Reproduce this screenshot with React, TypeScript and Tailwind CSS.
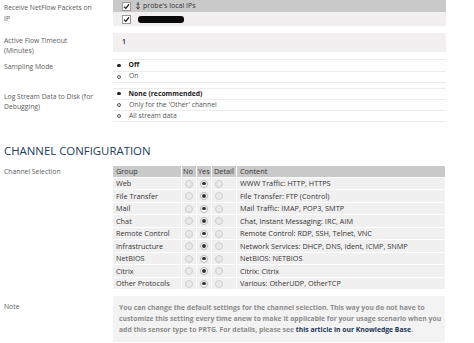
import React from 'react';

const channels = [
  { group: 'Web', content: 'WWW Traffic: HTTP, HTTPS' },
  { group: 'File Transfer', content: 'File Transfer: FTP (Control)' },
  { group: 'Mail', content: 'Mail Traffic: IMAP, POP3, SMTP' },
  { group: 'Chat', content: 'Chat, Instant Messaging: IRC, AIM' },
  { group: 'Remote Control', content: 'Remote Control: RDP, SSH, Telnet, VNC' },
  { group: 'Infrastructure', content: 'Network Services: DHCP, DNS, Ident, ICMP, SNMP' },
  { group: 'NetBIOS', content: 'NetBIOS: NETBIOS' },
  { group: 'Citrix', content: 'Citrix: Citrix' },
  { group: 'Other Protocols', content: 'Various: OtherUDP, OtherTCP' },
];

const Check: React.FC = () => (
  <span className="w-[9px] h-[9px] border border-[#9a9a9a] bg-white flex items-center justify-center">
    <svg width="7" height="7" viewBox="0 0 7 7">
      <path d="M1 3.6 L2.8 5.4 L6 1.4" fill="none" stroke="#111" strokeWidth="1.3" />
    </svg>
  </span>
);

const Radio: React.FC<{ on?: boolean }> = ({ on }) => (
  <span
    className={
      on
        ? 'w-[8px] h-[8px] rounded-full border border-[#b5b5b5] bg-white flex items-center justify-center'
        : 'w-[8px] h-[8px] rounded-full border border-[#cfcfcf] bg-[#e9e9e9]'
    }
  >
    {on && <span className="w-[3.5px] h-[3.5px] rounded-full bg-[#333]"></span>}
  </span>
);

const Option: React.FC<{ label: string; on?: boolean; h: string }> = ({ label, on, h }) => (
  <div className={`${h} flex items-center border-b border-[#ececec] pl-[4px]`}>
    {on ? (
      <span className="w-[3.5px] h-[3.5px] rounded-full bg-[#222]"></span>
    ) : (
      <span className="w-[4px] h-[4px] rounded-full border border-[#555]"></span>
    )}
    <span className={on ? 'ml-[8px] font-bold text-[#222]' : 'ml-[8px] text-[#555]'}>{label}</span>
  </div>
);

const App: React.FC = () => {
  return (
    <div className="w-[474px] h-[343px] bg-white overflow-hidden font-['Open_Sans',sans-serif] text-[6.8px] text-[#5c5c5c]">
      {/* Receive NetFlow Packets on IP */}
      <div className="flex">
        <div className="w-[113px] pl-[4px] pt-[3px] leading-[10.7px]">
          Receive NetFlow Packets on
          <br />
          IP
        </div>
        <div className="w-[333px]">
          <div className="h-[12px] bg-[#c9c9c9] flex items-center pl-[9px] text-[#333] text-[7px]">
            <Check />
            <svg className="ml-[5px]" width="4" height="8" viewBox="0 0 4 8">
              <path d="M2 0 V7 M0.4 5 L2 7.2 L3.6 5 M0.6 2.2 H3.4" fill="none" stroke="#444" strokeWidth="0.9" />
            </svg>
            <span className="ml-[3px]">probe&apos;s local IPs</span>
          </div>
          <div className="h-[14px] bg-[#f1eff0] flex items-center pl-[9px]">
            <Check />
            <span className="ml-[7px] w-[46px] h-[7px] rounded-[3px] bg-[#0a0a0a]"></span>
          </div>
        </div>
      </div>

      {/* Active Flow Timeout */}
      <div className="flex mt-[7px] h-[19px] items-start">
        <div className="w-[113px] pl-[4px] pt-[3px] leading-[10.2px]">
          Active Flow Timeout
          <br />
          (Minutes)
        </div>
        <div className="w-[333px] h-[19px] bg-[#f1eff0] flex items-center pl-[9px] text-[#222] text-[7px] font-semibold">
          1
        </div>
      </div>

      {/* Sampling Mode */}
      <div className="flex mt-[7px]">
        <div className="w-[113px] pl-[4px] pt-[3px]">Sampling Mode</div>
        <div className="w-[333px] border-t border-[#ececec]">
          <Option h="h-[11.5px]" label="Off" on />
          <Option h="h-[11px]" label="On" />
        </div>
      </div>

      {/* Log Stream */}
      <div className="flex mt-[5px]">
        <div className="w-[113px] pl-[4px] pt-[4px] leading-[10.7px]">
          Log Stream Data to Disk (for
          <br />
          Debugging)
        </div>
        <div className="w-[333px] border-t border-[#ececec]">
          <Option h="h-[11.3px]" label="None (recommended)" on />
          <Option h="h-[11px]" label="Only for the 'Other' channel" />
          <Option h="h-[11px]" label="All stream data" />
        </div>
      </div>

      <div className="mt-[22px] pl-[4px] text-[11.4px] leading-[14px] text-[#223d5c]">CHANNEL CONFIGURATION</div>

      {/* Channel Selection */}
      <div className="flex mt-[8px]">
        <div className="w-[113px] pl-[4px] pt-[1px]">Channel Selection</div>
        <div className="w-[332px] text-[7.3px] text-[#333]">
          <div className="h-[11px] bg-[#c9c9c9] flex items-center">
            <div className="w-[68px] pl-[3px]">Group</div>
            <div className="w-[15px] pl-[1px] border-l border-white h-full flex items-center">No</div>
            <div className="w-[15px] pl-[1px] border-l border-white h-full flex items-center">Yes</div>
            <div className="w-[25px] pl-[2px] border-l border-white h-full flex items-center">Detail</div>
            <div className="flex-1 pl-[3px] border-l border-white h-full flex items-center">Content</div>
          </div>
          {channels.map((c) => (
            <div key={c.group} className="h-[12.5px] flex border-t border-white bg-[#f1f0f0]">
              <div className="w-[68px] pl-[3px] flex items-center">{c.group}</div>
              <div className="w-[15px] pl-[3px] border-l border-white flex items-center">
                <Radio />
              </div>
              <div className="w-[15px] pl-[3px] border-l border-white flex items-center">
                <Radio on />
              </div>
              <div className="w-[25px] pl-[3px] border-l border-white flex items-center">
                <Radio />
              </div>
              <div className="flex-1 pl-[3px] border-l border-white flex items-center">{c.content}</div>
            </div>
          ))}
        </div>
      </div>

      {/* Note */}
      <div className="flex mt-[7px]">
        <div className="w-[113px] pl-[4px] pt-[6px]">Note</div>
        <div className="w-[332px] bg-[#f3f3f3] px-[6px] pt-[7px] pb-[6px] text-[6.8px] leading-[10.8px] font-bold text-[#8c8c8c] whitespace-nowrap">
          You can change the default settings for the channel selection. This way you do not have to
          <br />
          customize this setting every time anew to make it applicable for your usage scenario when you
          <br />
          add this sensor type to PRTG. For details, please see{' '}
          <span className="text-[#1d3557]">this article in our Knowledge Base</span>.
        </div>
      </div>
    </div>
  );
};

export default App;
